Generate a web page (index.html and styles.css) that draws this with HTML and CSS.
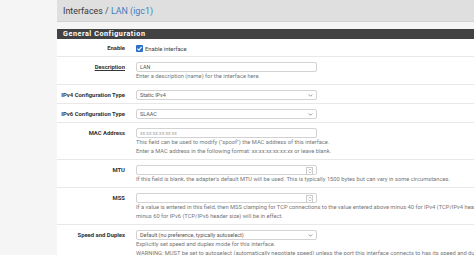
FILE: index.html
```html
<!DOCTYPE html>
<html lang="en">
<head>
  <meta charset="UTF-8">
  <title>Interfaces / LAN (igc1)</title>
  <link rel="stylesheet" href="styles.css">
</head>
<body>
  <div class="page">
    <div class="crumbs">Interfaces <span class="sep">/</span> <span class="here">LAN (igc1)</span></div>

    <div class="panel">
      <div class="panel-heading">General Configuration</div>

      <div class="row row-check">
        <div class="label">Enable</div>
        <div class="ctrl">
          <div class="check">
            <span class="box"><svg viewBox="0 0 8 8" width="7" height="7"><path d="M1.6 4.2 L3.3 5.8 L6.4 2.2" fill="none" stroke="#fff" stroke-width="1.3"/></svg></span>
            Enable interface
          </div>
        </div>
      </div>

      <div class="row">
        <div class="label required">Description</div>
        <div class="ctrl">
          <div class="input">LAN</div>
          <div class="help">Enter a description (name) for the interface here.</div>
        </div>
      </div>

      <div class="row">
        <div class="label">IPv4 Configuration Type</div>
        <div class="ctrl">
          <div class="input select">Static IPv4 <svg class="caret" viewBox="0 0 6 4" width="5" height="3"><path d="M0.6 0.6 L3 3 L5.4 0.6" fill="none" stroke="#666" stroke-width="0.9"/></svg></div>
        </div>
      </div>

      <div class="row">
        <div class="label">IPv6 Configuration Type</div>
        <div class="ctrl">
          <div class="input select">SLAAC <svg class="caret" viewBox="0 0 6 4" width="5" height="3"><path d="M0.6 0.6 L3 3 L5.4 0.6" fill="none" stroke="#666" stroke-width="0.9"/></svg></div>
        </div>
      </div>

      <div class="row">
        <div class="label">MAC Address</div>
        <div class="ctrl">
          <div class="input placeholder">xx:xx:xx:xx:xx:xx</div>
          <div class="help">This field can be used to modify ("spoof") the MAC address of this interface.<br>Enter a MAC address in the following format: xx:xx:xx:xx:xx:xx or leave blank.</div>
        </div>
      </div>

      <div class="row">
        <div class="label">MTU</div>
        <div class="ctrl">
          <div class="input number"><span class="spin"><svg viewBox="0 0 6 8" width="4" height="6"><path d="M1 3 L3 1 L5 3 M1 5 L3 7 L5 5" fill="none" stroke="#888" stroke-width="0.8"/></svg></span></div>
          <div class="help">If this field is blank, the adapter's default MTU will be used. This is typically 1500 bytes but can vary in some circumstances.</div>
        </div>
      </div>

      <div class="row">
        <div class="label">MSS</div>
        <div class="ctrl">
          <div class="input number"><span class="spin"><svg viewBox="0 0 6 8" width="4" height="6"><path d="M1 3 L3 1 L5 3 M1 5 L3 7 L5 5" fill="none" stroke="#888" stroke-width="0.8"/></svg></span></div>
          <div class="help">If a value is entered in this field, then MSS clamping for TCP connections to the value entered above minus 40 for IPv4 (TCP/IPv4 header size) or minus 60 for IPv6 (TCP/IPv6 header size) will be in effect.</div>
        </div>
      </div>

      <div class="row">
        <div class="label">Speed and Duplex</div>
        <div class="ctrl">
          <div class="input select">Default (no preference, typically autoselect) <svg class="caret" viewBox="0 0 6 4" width="5" height="3"><path d="M0.6 0.6 L3 3 L5.4 0.6" fill="none" stroke="#666" stroke-width="0.9"/></svg></div>
          <div class="help">Explicitly set speed and duplex mode for this interface.<br>WARNING: MUST be set to autoselect (automatically negotiate speed) unless the port this interface connects to has its speed and duplex setting forced.</div>
        </div>
      </div>
    </div>
  </div>
</body>
</html>
```

FILE: styles.css
```css
body {
  margin: 0;
  background: #f5f5f5;
  font-family: Roboto, "Liberation Sans", sans-serif;
  color: #333;
  overflow: hidden;
}

.page {
  margin-left: 57px;
  width: 600px;
}

.crumbs {
  height: 21px;
  line-height: 22px;
  padding-left: 6px;
  background: #dfdfdf;
  border-bottom: 1px solid #d2d2d2;
  font-size: 8.9px;
  color: #3a3a3a;
  margin-bottom: 7px;
}

.crumbs .sep {
  color: #555;
}

.crumbs .here {
  color: #3c7fc0;
}

.panel {
  background: #fff;
}

.panel-heading {
  height: 10px;
  line-height: 10px;
  padding-left: 6px;
  background: #424242;
  color: #fff;
  font-size: 7.2px;
  font-weight: bold;
  letter-spacing: 0.55px;
}

.row {
  display: grid;
  grid-template-columns: 68px 1fr;
  column-gap: 11px;
  padding: 5px 0 3px;
  border-bottom: 1px solid #e8e8e8;
}

.row-check .label {
  line-height: 9px;
}

.label {
  text-align: right;
  font-size: 5.9px;
  font-weight: bold;
  line-height: 10px;
  color: #333;
}

.label.required {
  text-decoration: underline;
}

.ctrl {
  min-width: 0;
}

.check {
  display: flex;
  align-items: center;
  gap: 2px;
  height: 9px;
  font-size: 5.8px;
  color: #444;
}

.box {
  width: 7px;
  height: 7px;
  border-radius: 1px;
  background: #2a6fc9;
  display: flex;
  align-items: center;
  justify-content: center;
}

.input {
  position: relative;
  box-sizing: border-box;
  width: 181px;
  height: 10px;
  line-height: 8px;
  padding: 0 3px;
  border: 1px solid #d2d2d2;
  border-radius: 2px;
  font-size: 5.4px;
  color: #555;
  background: #fff;
}

.input.placeholder {
  color: #aaa;
  letter-spacing: -0.1px;
}

.caret {
  position: absolute;
  right: 3px;
  top: 3px;
}

.spin {
  position: absolute;
  right: 3px;
  top: 1px;
  width: 5px;
  height: 6px;
  border: 0.5px solid #ccc;
  display: flex;
  align-items: center;
  justify-content: center;
}

.help {
  width: 368px;
  font-size: 5.75px;
  line-height: 9px;
  color: #777;
}
```
